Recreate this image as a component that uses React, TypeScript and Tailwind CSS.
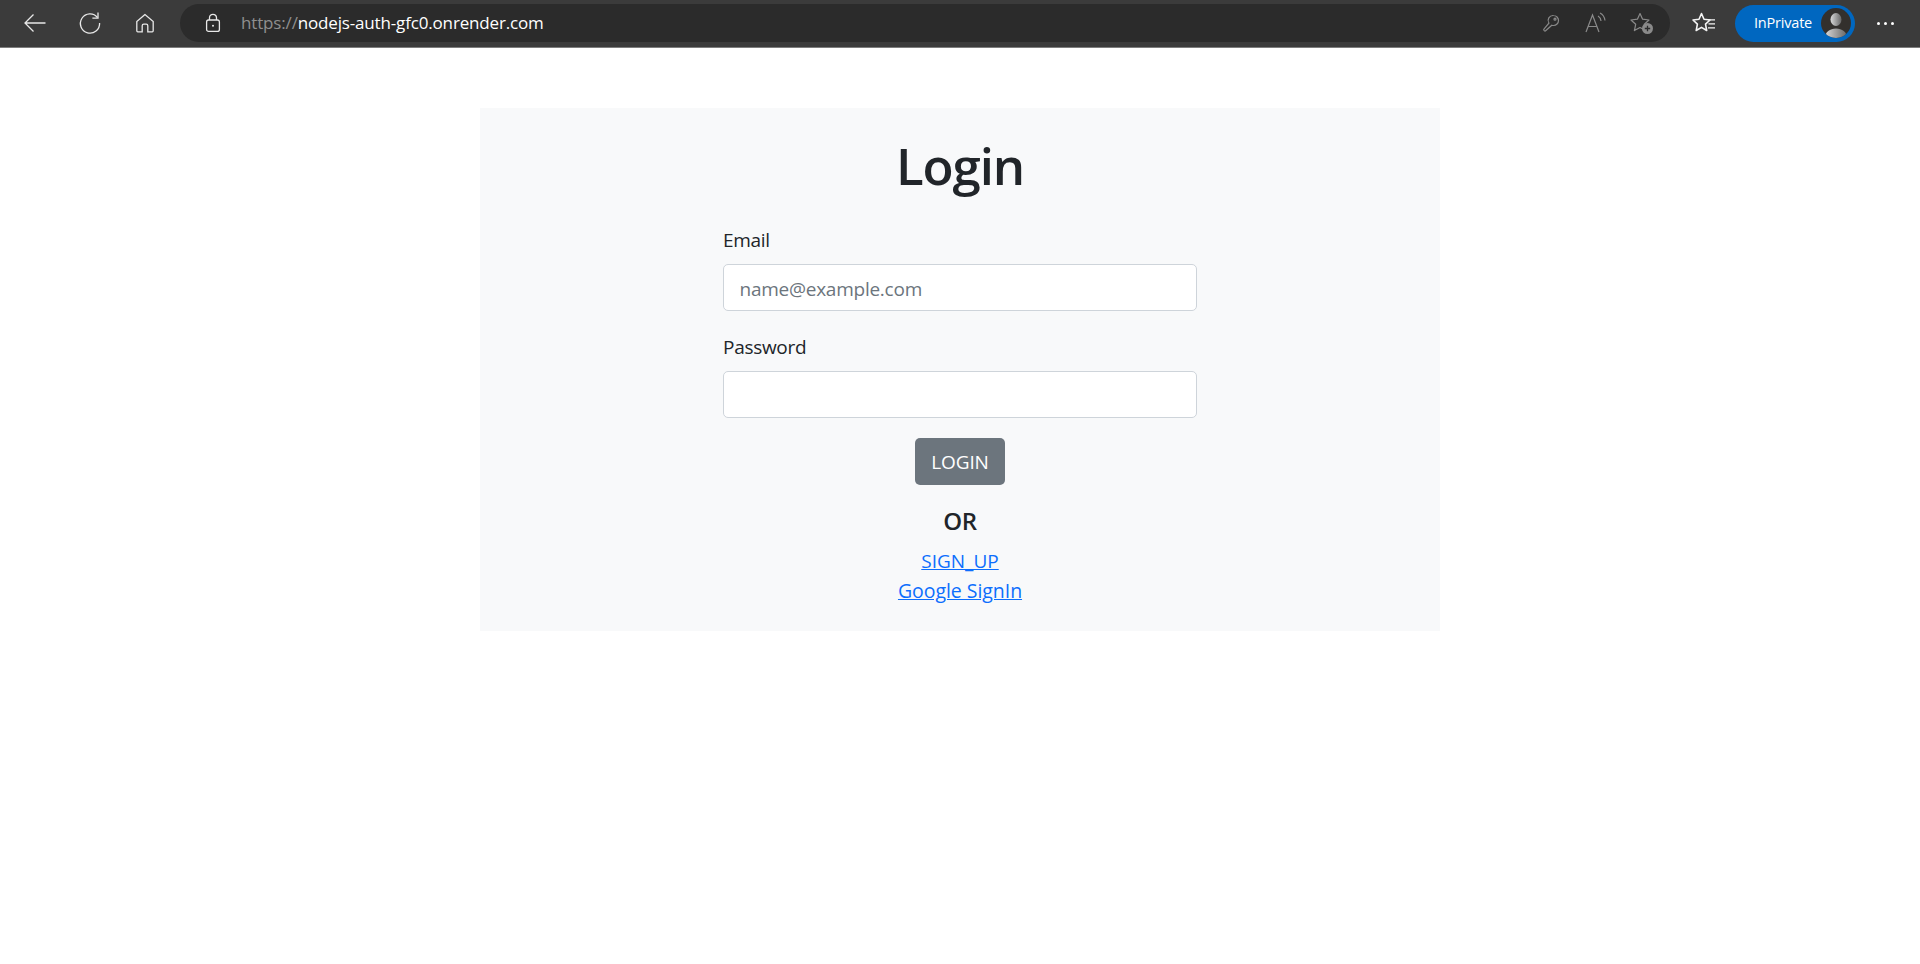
const font = "font-['Open_Sans','Noto_Sans',sans-serif]";

function BackIcon() {
  return (
    <svg width="24" height="24" viewBox="0 0 24 24" fill="none" stroke="#e8e8e8" strokeWidth="1.3">
      <path d="M22.500 12H2M10.500 3.500 2 12l8.500 8.500" />
    </svg>
  );
}

function RefreshIcon() {
  return (
    <svg width="24" height="24" viewBox="0 0 24 24" fill="none" stroke="#e8e8e8" strokeWidth="1.3">
      <path d="M19.500 6.500A9.600 9.600 0 1 0 21.600 12" />
      <path d="M20 1.500v5.600h-5.600" />
    </svg>
  );
}

function HomeIcon() {
  return (
    <svg width="22" height="22" viewBox="0 0 22 22" fill="none" stroke="#e8e8e8" strokeWidth="1.3">
      <path d="M11 2.500 2.800 9.600v9.200c0 .6.400 1 1 1h4.400v-6c0-.9.700-1.600 1.600-1.600h2.400c.9 0 1.600.7 1.600 1.600v6h4.400c.6 0 1-.4 1-1V9.600z" />
    </svg>
  );
}

function LockIcon() {
  return (
    <svg width="18" height="20" viewBox="0 0 18 20" fill="none" stroke="#e8e8e8" strokeWidth="1.3">
      <path d="M5.500 7V4.800a3.500 3.500 0 0 1 7 0V7" />
      <rect x="2.600" y="7" width="12.800" height="11.400" rx="2" />
      <circle cx="9" cy="12.700" r="1" fill="#e8e8e8" stroke="none" />
    </svg>
  );
}

function KeyIcon() {
  return (
    <svg width="20" height="20" viewBox="0 0 20 20" fill="none" stroke="#8a8a8a" strokeWidth="1.2">
      <path d="M12.500 2.500a5 5 0 0 1 0 10c-.6 0-1.200-.1-1.700-.3L4.600 17.800c-.8.700-2.400-.8-1.700-1.600l5-6a5 5 0 0 1 4.600-7.700z" />
      <circle cx="14" cy="6.200" r="1" />
    </svg>
  );
}

function ReadAloudIcon() {
  return (
    <svg width="24" height="22" viewBox="0 0 24 22" fill="none" stroke="#8a8a8a" strokeWidth="1.2">
      <path d="M3 20 9.500 3 16 20M5.500 14.500h8" />
      <path d="M15 4c1.700 1 2.800 2.800 3 5M17 1c3 1.500 4.600 4.300 5 7.500" />
    </svg>
  );
}

function FavAddIcon() {
  return (
    <svg width="26" height="24" viewBox="0 0 26 24" fill="none">
      <path d="M11 2.500 13.600 8.200 20 9l-4.700 4.300 1.300 6.300L11 16.500 5.400 19.600l1.300-6.300L2 9l6.400-.8z" stroke="#8a8a8a" strokeWidth="1.2" strokeLinejoin="round" />
      <circle cx="18.500" cy="17.500" r="5.500" fill="#8a8a8a" />
      <path d="M18.500 14.800v5.400M15.800 17.500h5.400" stroke="#2b2b2b" strokeWidth="1.3" />
    </svg>
  );
}

function FavoritesIcon() {
  return (
    <svg width="26" height="24" viewBox="0 0 26 24" fill="none" stroke="#f4f4f4" strokeWidth="1.6">
      <path d="M10.500 2.500 13 8.300l6 .7-4.500 4.200 1.200 6.300-5.200-3.100-5.300 3.100 1.200-6.300L2 9l6-.7z" strokeLinejoin="round" />
      <path d="M17 8.800h7M17.500 12.800h6.500M17 16.800h7" strokeWidth="1.200" />
    </svg>
  );
}

function Avatar() {
  return (
    <div className="w-[30px] h-[30px] rounded-full bg-[#33302d] overflow-hidden flex items-center justify-center">
      <svg width="30" height="30" viewBox="0 0 30 30">
        <defs>
          <linearGradient id="av" x1="0" y1="0" x2="1" y2="0">
            <stop offset="0" stopColor="#d8d8d8" />
            <stop offset="1" stopColor="#666" />
          </linearGradient>
        </defs>
        <ellipse cx="15" cy="11.500" rx="5.500" ry="6.500" fill="url(#av)" />
        <path d="M4 30c0-6 5-9.500 11-9.500S26 24 26 30z" fill="url(#av)" />
      </svg>
    </div>
  );
}

function Toolbar() {
  return (
    <div className="h-[48px] bg-[#3b3b3b] border-b border-[#7d7d7d] flex items-center pl-[23px] pr-[24px] pb-[1px]">
      <div className="w-[24px] flex justify-center"><BackIcon /></div>
      <div className="w-[24px] ml-[31px] flex justify-center"><RefreshIcon /></div>
      <div className="w-[24px] ml-[31px] flex justify-center"><HomeIcon /></div>
      <div className="ml-[23px] w-[1490px] h-[38px] rounded-full bg-[#2b2b2b] flex items-center pl-[24px] pr-[15px]">
        <LockIcon />
        <span className="ml-[19px] text-[17px] tracking-[-0.16px] text-[#8f8f8f]">
          https://<span className="text-white">nodejs-auth-gfc0.onrender.com</span>
        </span>
        <div className="ml-auto flex items-center gap-[22px]">
          <KeyIcon />
          <ReadAloudIcon />
          <FavAddIcon />
        </div>
      </div>
      <div className="ml-[21px]"><FavoritesIcon /></div>
      <div className="ml-[18px] w-[120px] h-[37px] rounded-full bg-[#0067c0] flex items-center justify-between pl-[19px] pr-[4px]">
        <span className="text-[14.5px] text-white tracking-[-0.2px]">InPrivate</span>
        <Avatar />
      </div>
      <div className="ml-[22px] flex gap-[4px]">
        <span className="w-[3px] h-[3px] rounded-full bg-white"></span>
        <span className="w-[3px] h-[3px] rounded-full bg-white"></span>
        <span className="w-[3px] h-[3px] rounded-full bg-white"></span>
      </div>
    </div>
  );
}

export default function App() {
  return (
    <div className={`min-h-[964px] bg-white ${font}`}>
      <Toolbar />
      <div className="w-[960px] h-[523px] mx-auto mt-[60px] bg-[#f8f9fa] flex flex-col items-center pt-[24px]">
        <h1 className="text-[51px] leading-[66px] font-semibold tracking-[-1.1px] text-[#212529]">Login</h1>
        <div className="w-[474px] mt-[27px]">
          <label className="block text-[19px] leading-[30px] tracking-[-0.3px] text-[#212529]">Email</label>
          <input
            placeholder="name@example.com"
            className="mt-[9px] block w-full h-[47px] px-[15.5px] pt-[3px] rounded-[5px] border border-[#ced4da] bg-white text-[19px] tracking-[-0.25px] placeholder:text-[#6c757d]"
          />
          <label className="block mt-[21px] text-[19px] leading-[30px] tracking-[-0.3px] text-[#212529]">Password</label>
          <input
            type="password"
            className="mt-[9px] block w-full h-[47px] px-[15.5px] rounded-[5px] border border-[#ced4da] bg-white"
          />
        </div>
        <button className="mt-[20px] w-[90px] h-[47px] pt-[2px] rounded-[5px] bg-[#6c757d] text-white text-[19px] tracking-[-0.1px]">LOGIN</button>
        <div className="mt-[18px] text-[24px] leading-[36px] font-semibold tracking-[-0.4px] text-[#212529]">OR</div>
        <a href="#" className="mt-[7px] text-[19px] leading-[30px] tracking-[0px] text-[#0d6efd] underline">SIGN_UP</a>
        <a href="#" className="text-[19.5px] leading-[30px] tracking-[-0.05px] text-[#0d6efd] underline">Google SignIn</a>
      </div>
    </div>
  );
}
